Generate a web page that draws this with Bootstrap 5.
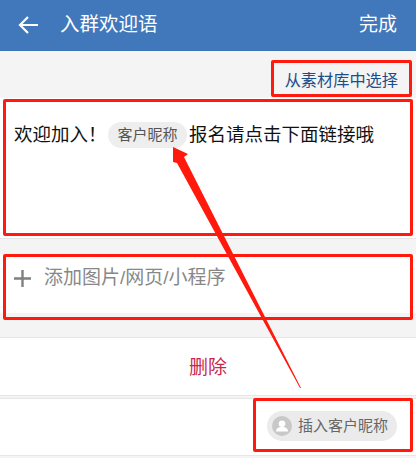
<!doctype html>
<html lang="zh">
  <head>
    <meta charset="utf-8">
    <meta name="viewport" content="width=device-width, initial-scale=1">
    <title>入群欢迎语</title>
    <link href="https://cdn.jsdelivr.net/npm/bootstrap@5.3.0/dist/css/bootstrap.min.css" rel="stylesheet">
    <style>
      html, body {height: 458px; overflow: hidden;}
      body {
        position: relative;
        background-color: #f4f4f4;
        font-family: "Liberation Sans", "Noto Sans CJK SC", sans-serif;
        color: #111;
      }
      .app-bar {height: 51px; background-color: #4178bc; color: #fff; border-bottom: 1px solid #3d72b3; padding: 0 19px 0 18px;}
      .bar-title {font-size: 19.5px; margin-left: 22px;}
      .done-label {font-size: 19px;}
      .pick-row {height: 47px; color: #1d4e89; font-size: 16.2px; padding-right: 18px; padding-top: 12px;}
      .editor {height: 141px; background-color: #fff; border-bottom: 1px solid #e6e6e6; padding: 24px 0 0 14px; font-size: 18.5px; line-height: 26px;}
      .nick-chip {background-color: #eee; color: #555; font-size: 15px; border-radius: 13px; height: 26px; width: 79px; margin: 0 2px 0 1.5px;}
      .add-row {height: 59px; margin-top: 15px; background-color: #fff; color: #888; font-size: 19px; padding: 0 0 10px 14px;}
      .add-label {margin-left: 13px;}
      .delete-row {height: 59px; margin-top: 24px; padding-top: 4px; background-color: #fff; color: #c9274c; font-size: 19px; border-top: 1px solid #e6e6e6; border-bottom: 1px solid #e6e6e6;}
      .tool-row {height: 58px; margin-top: 2px; padding: 0 19px 2px 0; background-color: #fff; border-top: 1px solid #e6e6e6; border-bottom: 1px solid #e6e6e6;}
      .insert-chip {height: 30px; width: 130px; background-color: #ebebeb; color: #666; font-size: 15px; border-radius: 15px; padding-left: 5px; gap: 6px;}
      .mark-box {position: absolute; border: 3px solid #ff1a0d; border-radius: 2px;}
      .box-pick {left: 271px; top: 60px; width: 141px; height: 37px;}
      .box-editor {left: 3px; top: 99px; width: 410px; height: 137px;}
      .box-add {left: 3px; top: 254px; width: 410px; height: 66px;}
      .box-insert {left: 253px; top: 398px; width: 160px; height: 54px;}
      .mark-arrow {position: absolute; left: 0; top: 0;}
    </style>
  </head>

  <body>
    <header class="app-bar d-flex align-items-center justify-content-between">
      <div class="d-flex align-items-center">
        <svg width="20" height="18" viewBox="0 0 20 18" fill="none" stroke="#fff" stroke-width="2.2"><path d="M20 9H2M10 1 2 9l8 8"/></svg>
        <span class="bar-title">入群欢迎语</span>
      </div>
      <span class="done-label">完成</span>
    </header>

    <div class="pick-row d-flex align-items-center justify-content-end">从素材库中选择</div>

    <div class="editor d-flex align-items-start">
      <span>欢迎加入！</span>
      <span class="nick-chip d-inline-flex align-items-center justify-content-center">客户昵称</span>
      <span>报名请点击下面链接哦</span>
    </div>

    <div class="add-row d-flex align-items-center">
      <svg width="17" height="17" viewBox="0 0 17 17" stroke="#808080" stroke-width="2.4"><path d="M0 8.5h17M8.5 0v17"/></svg>
      <span class="add-label">添加图片/网页/小程序</span>
    </div>

    <div class="delete-row d-flex align-items-center justify-content-center">删除</div>

    <div class="tool-row d-flex align-items-center justify-content-end">
      <div class="insert-chip d-flex align-items-center">
        <svg width="20" height="20" viewBox="0 0 20 20"><circle cx="10" cy="10" r="10" fill="#c8c8c8"/><circle cx="10" cy="7.8" r="3.3" fill="#fff"/><path d="M4 15.5c0-3.2 2.6-4.6 6-4.6s6 1.4 6 4.6z" fill="#fff"/></svg>
        <span>插入客户昵称</span>
      </div>
    </div>

    <div class="mark-box box-pick"></div>
    <div class="mark-box box-editor"></div>
    <div class="mark-box box-add"></div>
    <div class="mark-box box-insert"></div>

    <svg class="mark-arrow" width="416" height="458" viewBox="0 0 416 458">
      <path d="M173 147 188 154 184 157 301 388 300 388 177 163 173 162z" fill="#ff1a0d"/>
    </svg>
  </body>
</html>
